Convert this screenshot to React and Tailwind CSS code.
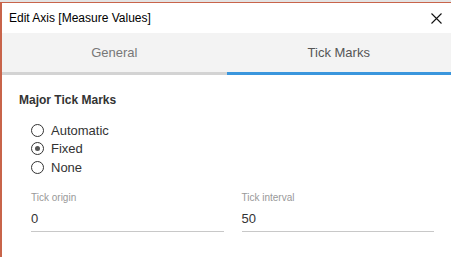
import React from 'react';

function Radio({ checked, label }) {
  return (
    <label className="flex items-center gap-[7px] h-[18.5px]">
      <span className="w-[13px] h-[13px] rounded-full border border-[#333] bg-white flex items-center justify-center">
        {checked && <span className="w-[5px] h-[5px] rounded-full bg-[#555]" />}
      </span>
      <span className="text-[13px] text-[#333]">{label}</span>
    </label>
  );
}

function Field({ label, value }) {
  return (
    <div className="flex-1">
      <div className="text-[10px] text-[#999] leading-none">{label}</div>
      <div className="mt-[9px] text-[13px] text-[#333] leading-none pb-[6px] border-b-[1px] border-[#c8c8c8]">{value}</div>
    </div>
  );
}

export default function App() {
  return (
    <div className="w-[451px] h-[257px] overflow-hidden bg-[#dcdcdc] font-['Liberation_Sans',Arial,sans-serif]">
      <div className="h-[2px] bg-[#e3e3e3]" />
      <div className="h-[255px] bg-white border-t border-l-2 border-[#c8644a] flex flex-col">
        <div className="h-[30px] flex items-center justify-between pl-[7px] pr-[9px]">
          <span className="text-[12px] text-black">Edit Axis [Measure Values]</span>
          <svg width="11" height="11" viewBox="0 0 11 11" className="block">
            <path d="M0.5 0.5 L10.5 10.5 M10.5 0.5 L0.5 10.5" stroke="#111" strokeWidth="1.1" />
          </svg>
        </div>
        <div className="flex bg-[#f3f3f3] h-[42px]">
          <div className="flex-1 flex flex-col">
            <div className="flex-1 flex items-center justify-center text-[13px] text-[#777]">General</div>
            <div className="h-[3px] bg-[#d3d3d3]" />
          </div>
          <div className="flex-1 flex flex-col">
            <div className="flex-1 flex items-center justify-center text-[13px] text-[#555] font-medium">Tick Marks</div>
            <div className="h-[3px] bg-[#3a96dd]" />
          </div>
        </div>
        <div className="pl-[17px] pr-[16px] pt-[19px]">
          <div className="text-[12px] font-bold text-[#333] leading-none">Major Tick Marks</div>
          <div className="mt-[15px] pl-[12px] flex flex-col">
            <Radio label="Automatic" />
            <Radio checked label="Fixed" />
            <Radio label="None" />
          </div>
          <div className="mt-[16px] pl-[12px] flex gap-[18px] pr-[1px]">
            <Field label="Tick origin" value="0" />
            <Field label="Tick interval" value="50" />
          </div>
        </div>
      </div>
    </div>
  );
}
